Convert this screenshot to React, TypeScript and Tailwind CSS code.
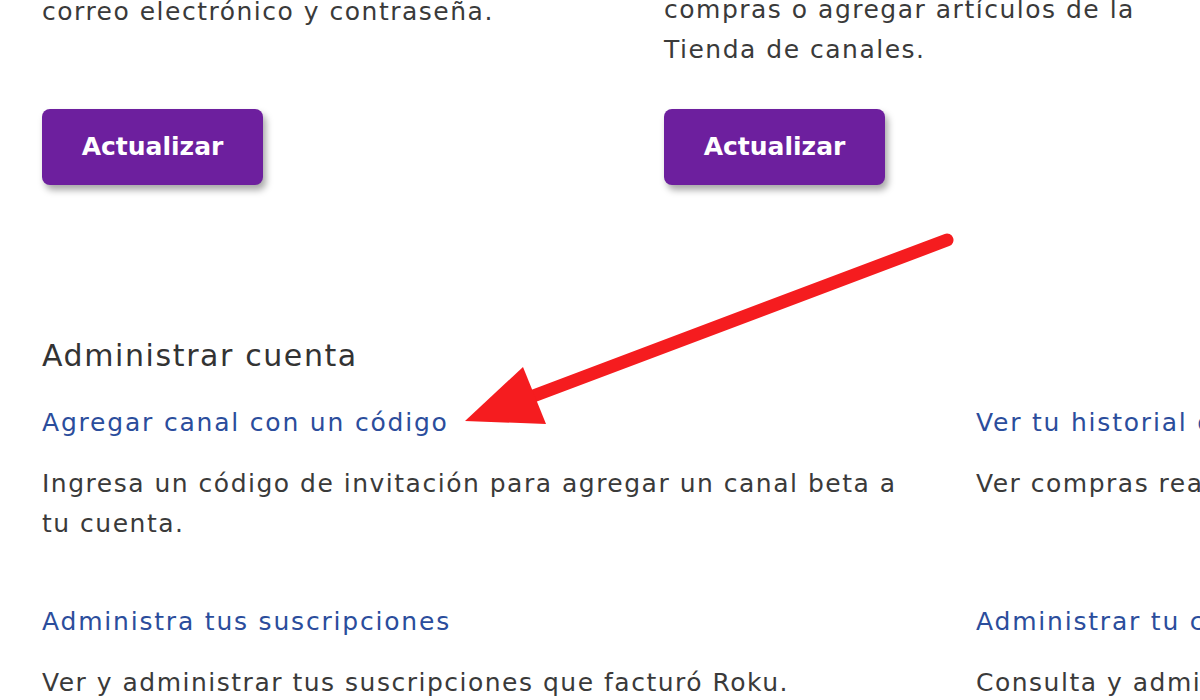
import React from 'react';

const font = { fontFamily: '"DejaVu Sans", "Open Sans", sans-serif' };

const UpdateButton = () => (
  <button className="w-[221px] h-[76px] rounded-lg bg-[#6d1f9e] text-white text-[25px] tracking-normal font-bold shadow-[3px_5px_7px_rgba(0,0,0,0.35)]">
    Actualizar
  </button>
);

const Item = ({ title, desc }: { title: string; desc: string[] }) => (
  <div className="flex flex-col">
    <a className="text-[#2b4d9c] text-[25px] leading-[40px] tracking-[1.8px] whitespace-nowrap">{title}</a>
    <div className="mt-[21px] text-[#3a3a3a] text-[25px] leading-[40px] tracking-[1.5px]">
      {desc.map(line => (
        <p key={line} className="whitespace-nowrap">
          {line}
        </p>
      ))}
    </div>
  </div>
);

const Arrow = () => (
  <svg className="absolute left-0 top-0 pointer-events-none" width="1200" height="700">
    <line x1="947" y1="240" x2="528" y2="398" stroke="#f51c1f" strokeWidth="13" strokeLinecap="round" />
    <polygon points="465,421 523,367 546,424" fill="#f51c1f" />
  </svg>
);

export default function App() {
  return (
    <div className="relative w-[1200px] h-[700px] overflow-hidden bg-white" style={font}>
      <div className="pl-[42px] -mt-[8px]">
        <div className="grid grid-cols-[622px_1fr] text-[#3a3a3a] text-[25px] leading-[40px] tracking-[1.5px]">
          <div className="flex flex-col">
            <p>correo electrónico y contraseña.</p>
            <div className="mt-auto">
              <UpdateButton />
            </div>
          </div>
          <div className="flex flex-col -mt-[2px]">
            <p>compras o agregar artículos de la</p>
            <p>Tienda de canales.</p>
            <div className="mt-[39px]">
              <UpdateButton />
            </div>
          </div>
        </div>

        <h2 className="mt-[151px] text-[30px] leading-[40px] tracking-[1.6px] text-[#333]">Administrar cuenta</h2>

        <div className="mt-[27px] grid grid-cols-[934px_900px] gap-y-[58px]">
          <Item
            title="Agregar canal con un código"
            desc={['Ingresa un código de invitación para agregar un canal beta a', 'tu cuenta.']}
          />
          <Item title="Ver tu historial de compras" desc={['Ver compras realizadas con tu cuenta.']} />
          <Item title="Administra tus suscripciones" desc={['Ver y administrar tus suscripciones que facturó Roku.']} />
          <Item title="Administrar tu cuenta" desc={['Consulta y administra tu información.']} />
        </div>
      </div>
      <Arrow />
    </div>
  );
}
